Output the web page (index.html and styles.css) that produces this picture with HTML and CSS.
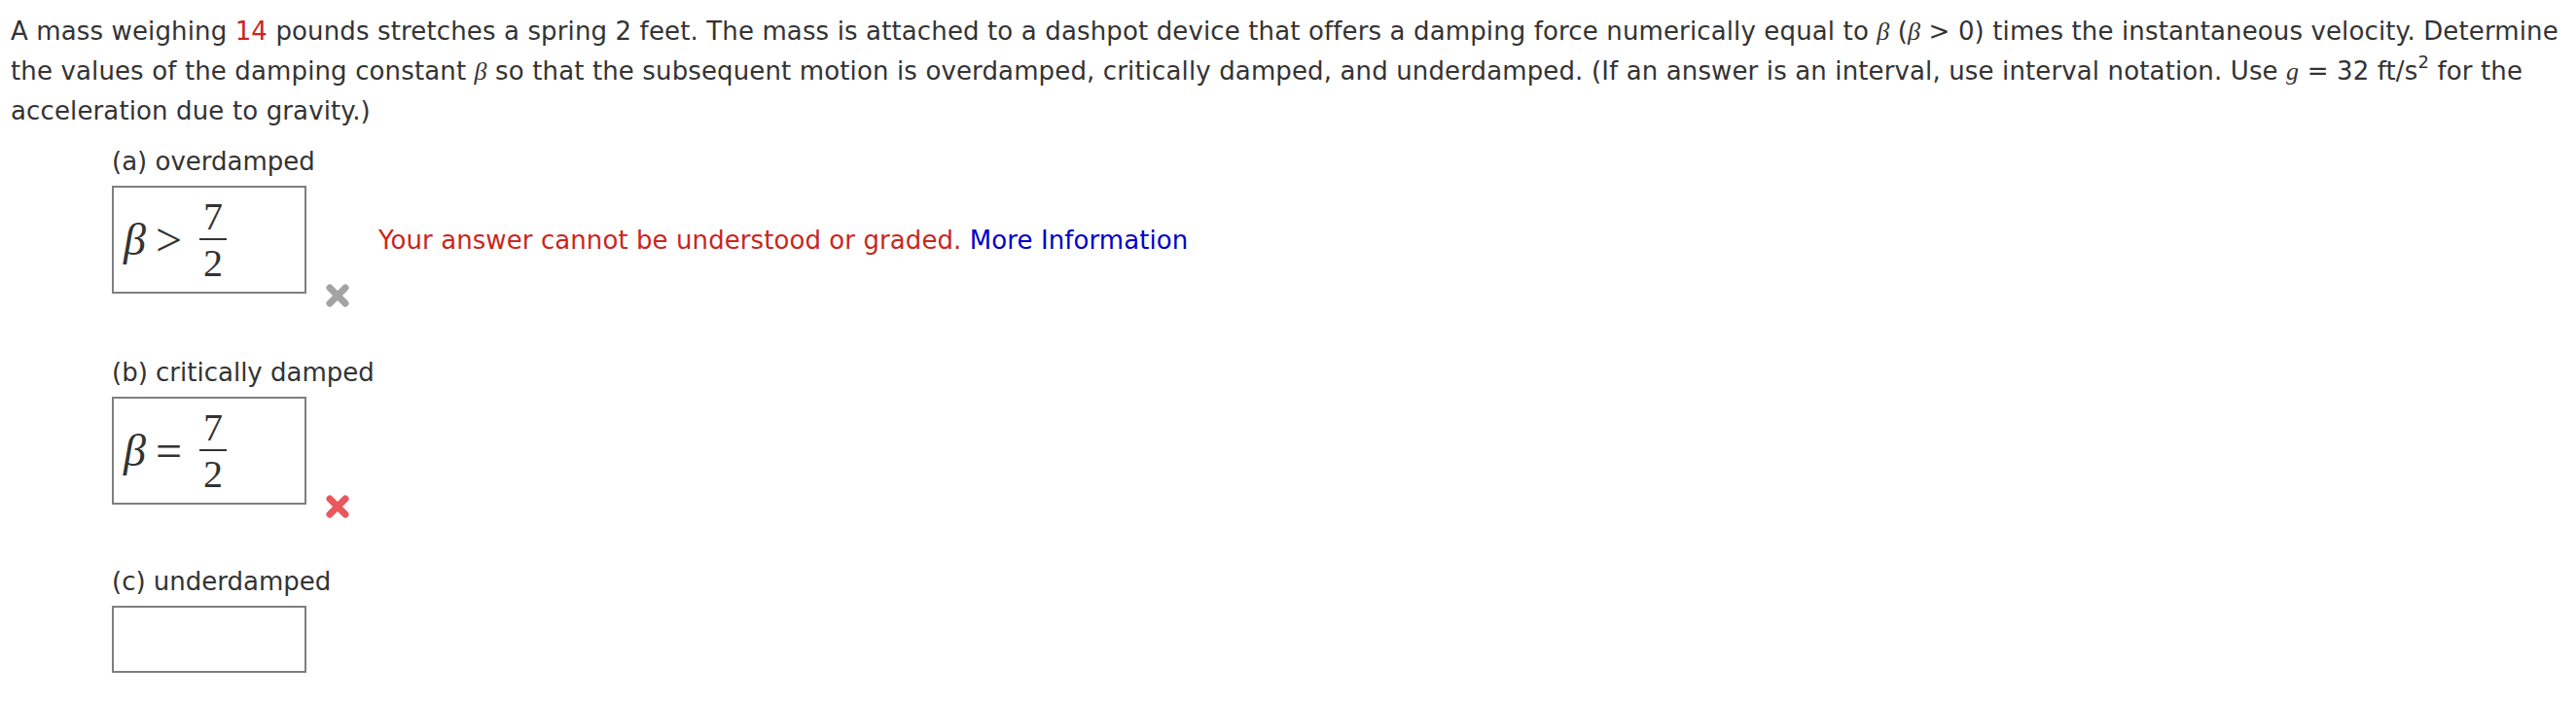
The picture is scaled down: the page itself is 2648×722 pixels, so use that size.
FILE: index.html
```html
<!DOCTYPE html>
<html>
<head>
<meta charset="utf-8">
<link rel="stylesheet" href="styles.css">
</head>
<body>
<div class="question">
  <p class="prompt">A mass weighing <span class="num">14</span> pounds stretches a spring 2 feet. The mass is attached to a dashpot device that offers a damping force numerically equal to <span class="mi">β</span> (<span class="mi">β</span> &gt; 0) times the instantaneous velocity. Determine the values of the damping constant <span class="mi">β</span> so that the subsequent motion is overdamped, critically damped, and underdamped. (If an answer is an interval, use interval notation. Use <span class="mi">g</span> = 32 ft/s<sup>2</sup> for the acceleration due to gravity.)</p>

  <div class="parts">
    <div class="part part-a">
      <div class="label">(a) overdamped</div>
      <div class="row">
        <div class="answer tall">
          <span class="math"><span class="mi big">β</span><span class="mo">&gt;</span><span class="frac"><span class="numer">7</span><span class="denom">2</span></span></span>
        </div>
        <svg class="mark" viewBox="0 0 28 26" width="28" height="26"><path d="M6 5 L22 21 M22 5 L6 21" stroke="#a3a3a3" stroke-width="7" stroke-linecap="round"/></svg>
        <div class="feedback"><span class="err">Your answer cannot be understood or graded.</span> <span class="more">More Information</span></div>
      </div>
    </div>

    <div class="part part-b">
      <div class="label">(b) critically damped</div>
      <div class="row">
        <div class="answer tall">
          <span class="math"><span class="mi big">β</span><span class="mo">=</span><span class="frac"><span class="numer">7</span><span class="denom">2</span></span></span>
        </div>
        <svg class="mark" viewBox="0 0 28 26" width="28" height="26"><path d="M6 5 L22 21 M22 5 L6 21" stroke="#e8585c" stroke-width="7" stroke-linecap="round"/></svg>
      </div>
    </div>

    <div class="part part-c">
      <div class="label">(c) underdamped</div>
      <div class="row">
        <div class="answer short"></div>
      </div>
    </div>
  </div>
</div>
</body>
</html>
```

FILE: styles.css
```css
html, body {
  margin: 0;
  padding: 0;
  background: #ffffff;
}

body {
  font-family: "DejaVu Sans", Verdana, sans-serif;
  font-size: 26px;
  color: #333333;
}

.question {
  padding: 0 0 0 11px;
  width: 2630px;
}

.prompt {
  margin: 12px 0 0 0;
  line-height: 40px;
  letter-spacing: 0.13px;
}

.prompt sup {
  font-size: 18px;
  line-height: 0;
  vertical-align: 12px;
}

.num {
  color: #c9261d;
}

.mi {
  font-family: "Liberation Serif", "DejaVu Serif", serif;
  font-style: italic;
}

.parts {
  display: flex;
  flex-direction: column;
  padding-left: 104px;
}

.part {
  display: flex;
  flex-direction: column;
}

.part-a {
  margin-top: 12px;
}

.part-b {
  margin-top: 61px;
}

.part-c {
  margin-top: 59px;
}

.label {
  line-height: 40px;
  height: 40px;
}

.row {
  display: flex;
  align-items: center;
  margin-top: 5px;
}

.answer {
  box-sizing: border-box;
  width: 200px;
  border: 2px solid #7f7f7f;
  display: flex;
  align-items: center;
  padding-left: 10px;
}

.answer.tall {
  height: 111px;
}

.answer.short {
  height: 69px;
}

.math {
  display: flex;
  align-items: center;
  font-family: "Liberation Serif", "DejaVu Serif", serif;
  color: #333333;
}

.math .big {
  font-size: 46px;
  margin-right: 10px;
  line-height: 1;
}

.math .mo {
  font-family: "Liberation Serif", serif;
  font-size: 48px;
  margin-right: 18px;
  line-height: 1;
}

.frac {
  display: flex;
  flex-direction: column;
  align-items: center;
  font-family: "Liberation Serif", serif;
  font-size: 40px;
  line-height: 1;
}

.numer {
  padding: 0 4px 2px 4px;
  border-bottom: 2px solid #333333;
}

.denom {
  padding-top: 4px;
}

.mark {
  align-self: flex-end;
  margin-left: 18px;
  margin-bottom: -15px;
  flex: none;
}

.feedback {
  margin-left: 28px;
  font-size: 26px;
  letter-spacing: 0.08px;
}

.err {
  color: #c9261d;
}

.more {
  color: #0000c8;
}
```
